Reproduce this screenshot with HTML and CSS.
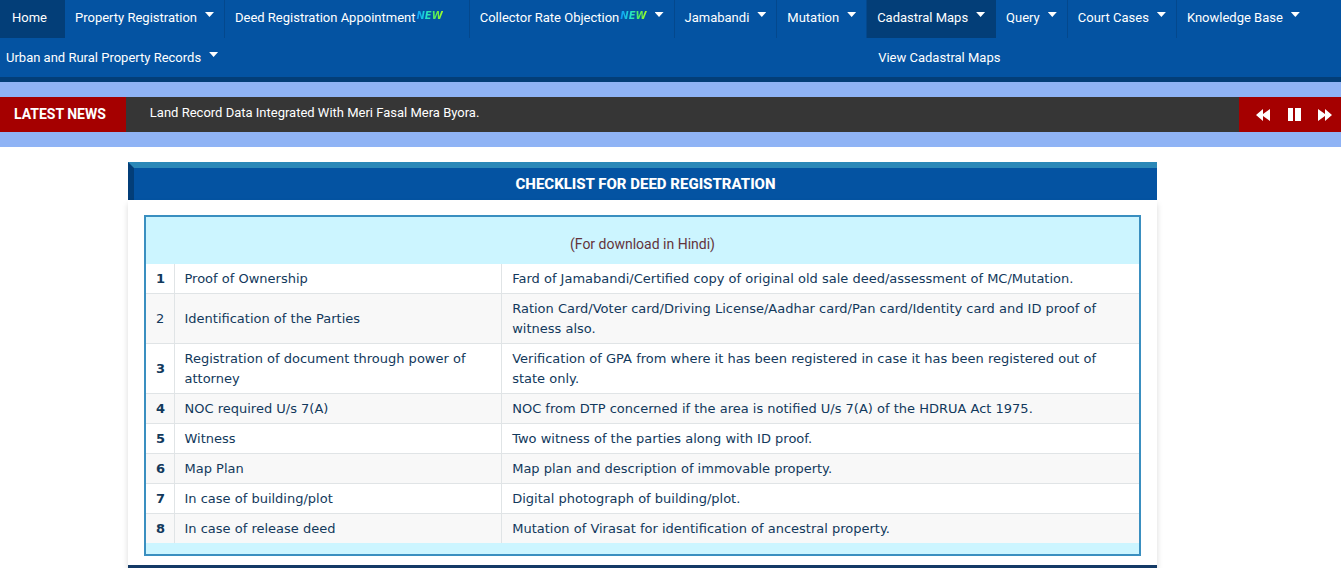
FILE: index.html
```
<!DOCTYPE html>
<html lang="en">
  <head>
    <meta charset="UTF-8" />
    <title>Checklist for Deed Registration</title>
    <meta name="viewport" content="width=device-width, initial-scale=1.0" />
    <link rel="stylesheet" href="styles.css">
  </head>
  <body>
    <nav class="navbar">
      <ul class="menu">
        <li class="active home"><a href="#">Home</a></li>
        <li><a href="#">Property Registration<span class="caret"></span></a></li>
        <li class="wide"><a href="#">Deed Registration Appointment<span class="new">NEW</span></a></li>
        <li><a href="#">Collector Rate Objection<span class="new">NEW</span><span class="caret"></span></a></li>
        <li><a href="#">Jamabandi<span class="caret"></span></a></li>
        <li><a href="#">Mutation<span class="caret"></span></a></li>
        <li class="active">
          <a href="#">Cadastral Maps<span class="caret"></span></a>
          <ul class="submenu">
            <li><a href="#">View Cadastral Maps</a></li>
          </ul>
        </li>
        <li><a href="#">Query<span class="caret"></span></a></li>
        <li><a href="#">Court Cases<span class="caret"></span></a></li>
        <li class="last"><a href="#">Knowledge Base<span class="caret"></span></a></li>
      </ul>
      <ul class="menu second">
        <li class="last"><a href="#">Urban and Rural Property Records<span class="caret"></span></a></li>
      </ul>
    </nav>

    <section class="news">
      <div class="ticker">
        <h2>LATEST NEWS</h2>
        <p>Land Record Data Integrated With Meri Fasal Mera Byora.</p>
        <div class="controls">
          <button type="button" aria-label="Previous">
            <svg width="14" height="14" viewBox="0 0 14 14"><path d="M0 7l7-6v5l7-5v12l-7-5v5z"/></svg>
          </button>
          <button type="button" aria-label="Pause">
            <svg width="14" height="14" viewBox="0 0 14 14"><path d="M1 0h5v13H1zM8 0h6v13H8z"/></svg>
          </button>
          <button type="button" aria-label="Next">
            <svg width="14" height="14" viewBox="0 0 14 14"><path d="M14 7L7 1v5L0 1v12l7-5v5z"/></svg>
          </button>
        </div>
      </div>
    </section>

    <main class="container">
      <h1>CHECKLIST FOR DEED REGISTRATION</h1>
      <div class="panel">
        <div class="checklist">
          <a class="download" href="#">(For download in Hindi)</a>
          <table>
            <tbody>
              <tr>
                <td><b>1</b></td>
                <td>Proof of Ownership</td>
                <td>Fard of Jamabandi/Certified copy of original old sale deed/assessment of MC/Mutation.</td>
              </tr>
              <tr>
                <td>2</td>
                <td>Identification of the Parties</td>
                <td>Ration Card/Voter card/Driving License/Aadhar card/Pan card/Identity card and ID proof of witness also.</td>
              </tr>
              <tr>
                <td><b>3</b></td>
                <td>Registration of document through power of attorney</td>
                <td>Verification of GPA from where it has been registered in case it has been registered out of state only.</td>
              </tr>
              <tr>
                <td><b>4</b></td>
                <td>NOC required U/s 7(A)</td>
                <td>NOC from DTP concerned if the area is notified U/s 7(A) of the HDRUA Act 1975.</td>
              </tr>
              <tr>
                <td><b>5</b></td>
                <td>Witness</td>
                <td>Two witness of the parties along with ID proof.</td>
              </tr>
              <tr>
                <td><b>6</b></td>
                <td>Map Plan</td>
                <td>Map plan and description of immovable property.</td>
              </tr>
              <tr>
                <td><b>7</b></td>
                <td>In case of building/plot</td>
                <td>Digital photograph of building/plot.</td>
              </tr>
              <tr>
                <td><b>8</b></td>
                <td>In case of release deed</td>
                <td>Mutation of Virasat for identification of ancestral property.</td>
              </tr>
            </tbody>
          </table>
        </div>
      </div>
    </main>
  </body>
</html>
```
FILE: styles.css
```
* {
  box-sizing: border-box;
}
body {
  margin: 0;
  background: #fff;
  font-family: Roboto, "Liberation Sans", sans-serif;
  font-size: 13px;
}
ul {
  list-style: none;
  margin: 0;
  padding: 0;
}
a {
  text-decoration: none;
}

/* Navigation */
.navbar {
  background: #0453a2;
  border-bottom: 5px solid #033e78;
}
.menu {
  display: flex;
}
.menu > li {
  position: relative;
  border-right: 1px solid #04488d;
}
.menu > .last {
  border-right: 0;
}
.menu a {
  display: flex;
  height: 38px;
  padding: 0 10px;
  color: #fff;
  line-height: 36px;
  white-space: nowrap;
}
.menu .home a {
  padding: 0 17px 0 12px;
}
.menu .wide a {
  padding-right: 26px;
}
.menu > .active {
  background: #033e78;
  border-color: #033e78;
}
.second a {
  height: 39px;
  padding-left: 6px;
  line-height: 39px;
}
.submenu {
  position: absolute;
  top: 100%;
  left: 0;
}
.submenu a {
  height: 39px;
  line-height: 39px;
  padding-left: 11px;
}
.caret {
  margin: 12px 0 0 8px;
  width: 9px;
  height: 5px;
  background: #fff;
  clip-path: polygon(0 0, 100% 0, 50% 100%);
}
.second .caret {
  margin-top: 14px;
}
.new {
  padding-left: 1px;
  background: linear-gradient(90deg, #0a8cff, #1fe0d0 40%, #5cf04a 75%, #a8ff2a);
  background-clip: text;
  -webkit-background-clip: text;
  color: transparent;
  font: italic bold 10px "DejaVu Sans", sans-serif;
  line-height: 32px;
}

/* News ticker */
.news {
  padding: 15px 0;
  background: #8fb3f5;
}
.ticker {
  display: flex;
  height: 35px;
  background: #363636;
  color: #fff;
}
.ticker h2 {
  margin: 0;
  padding: 0 20px 0 14px;
  background: #a50000;
  font-size: 14px;
  font-weight: 700;
  line-height: 35px;
}
.ticker p {
  flex: 1;
  margin: 0;
  padding-left: 24px;
  line-height: 32px;
}
.controls {
  display: flex;
  align-items: center;
  gap: 17px;
  padding: 0 9px 0 17px;
  background: #a50000;
}
.controls button {
  display: flex;
  padding: 0;
  border: 0;
  background: none;
  cursor: pointer;
}
.controls svg {
  fill: #fff;
}

/* Checklist */
.container {
  margin: 15px 184px 0 128px;
}
h1 {
  margin: 0;
  padding-top: 1px;
  border-top: 6px solid #2b88b8;
  border-left: 6px solid #033e78;
  background: #0453a2;
  color: #fff;
  font-size: 15px;
  font-weight: 800;
  line-height: 31px;
  text-align: center;
}
.panel {
  padding: 15px 16px 9px;
  border-bottom: 3px solid #143a66;
  box-shadow: 0 4px 6px rgba(0, 0, 0, 0.15);
}
.checklist {
  padding-bottom: 11px;
  border: 2px solid #3a8fc0;
  background: #ccf5ff;
}
.download {
  display: block;
  padding: 10px 0 2px;
  color: #63333b;
  font-size: 14px;
  line-height: 35px;
  text-align: center;
}
table {
  width: 100%;
  border-collapse: collapse;
  background: #fff;
  color: #12395c;
  font-family: "DejaVu Sans", sans-serif;
  line-height: 20px;
}
td {
  padding: 5px 8px 4px 10px;
  border-right: 1px solid #e0e4e6;
  border-bottom: 1px solid #e0e4e6;
}
td:first-child {
  width: 28px;
}
td:nth-child(2) {
  width: 33%;
}
td:last-child {
  border-right: 0;
}
tr:last-child td {
  border-bottom: 0;
}
tr:nth-child(even) {
  background: #f8f8f8;
}
```
